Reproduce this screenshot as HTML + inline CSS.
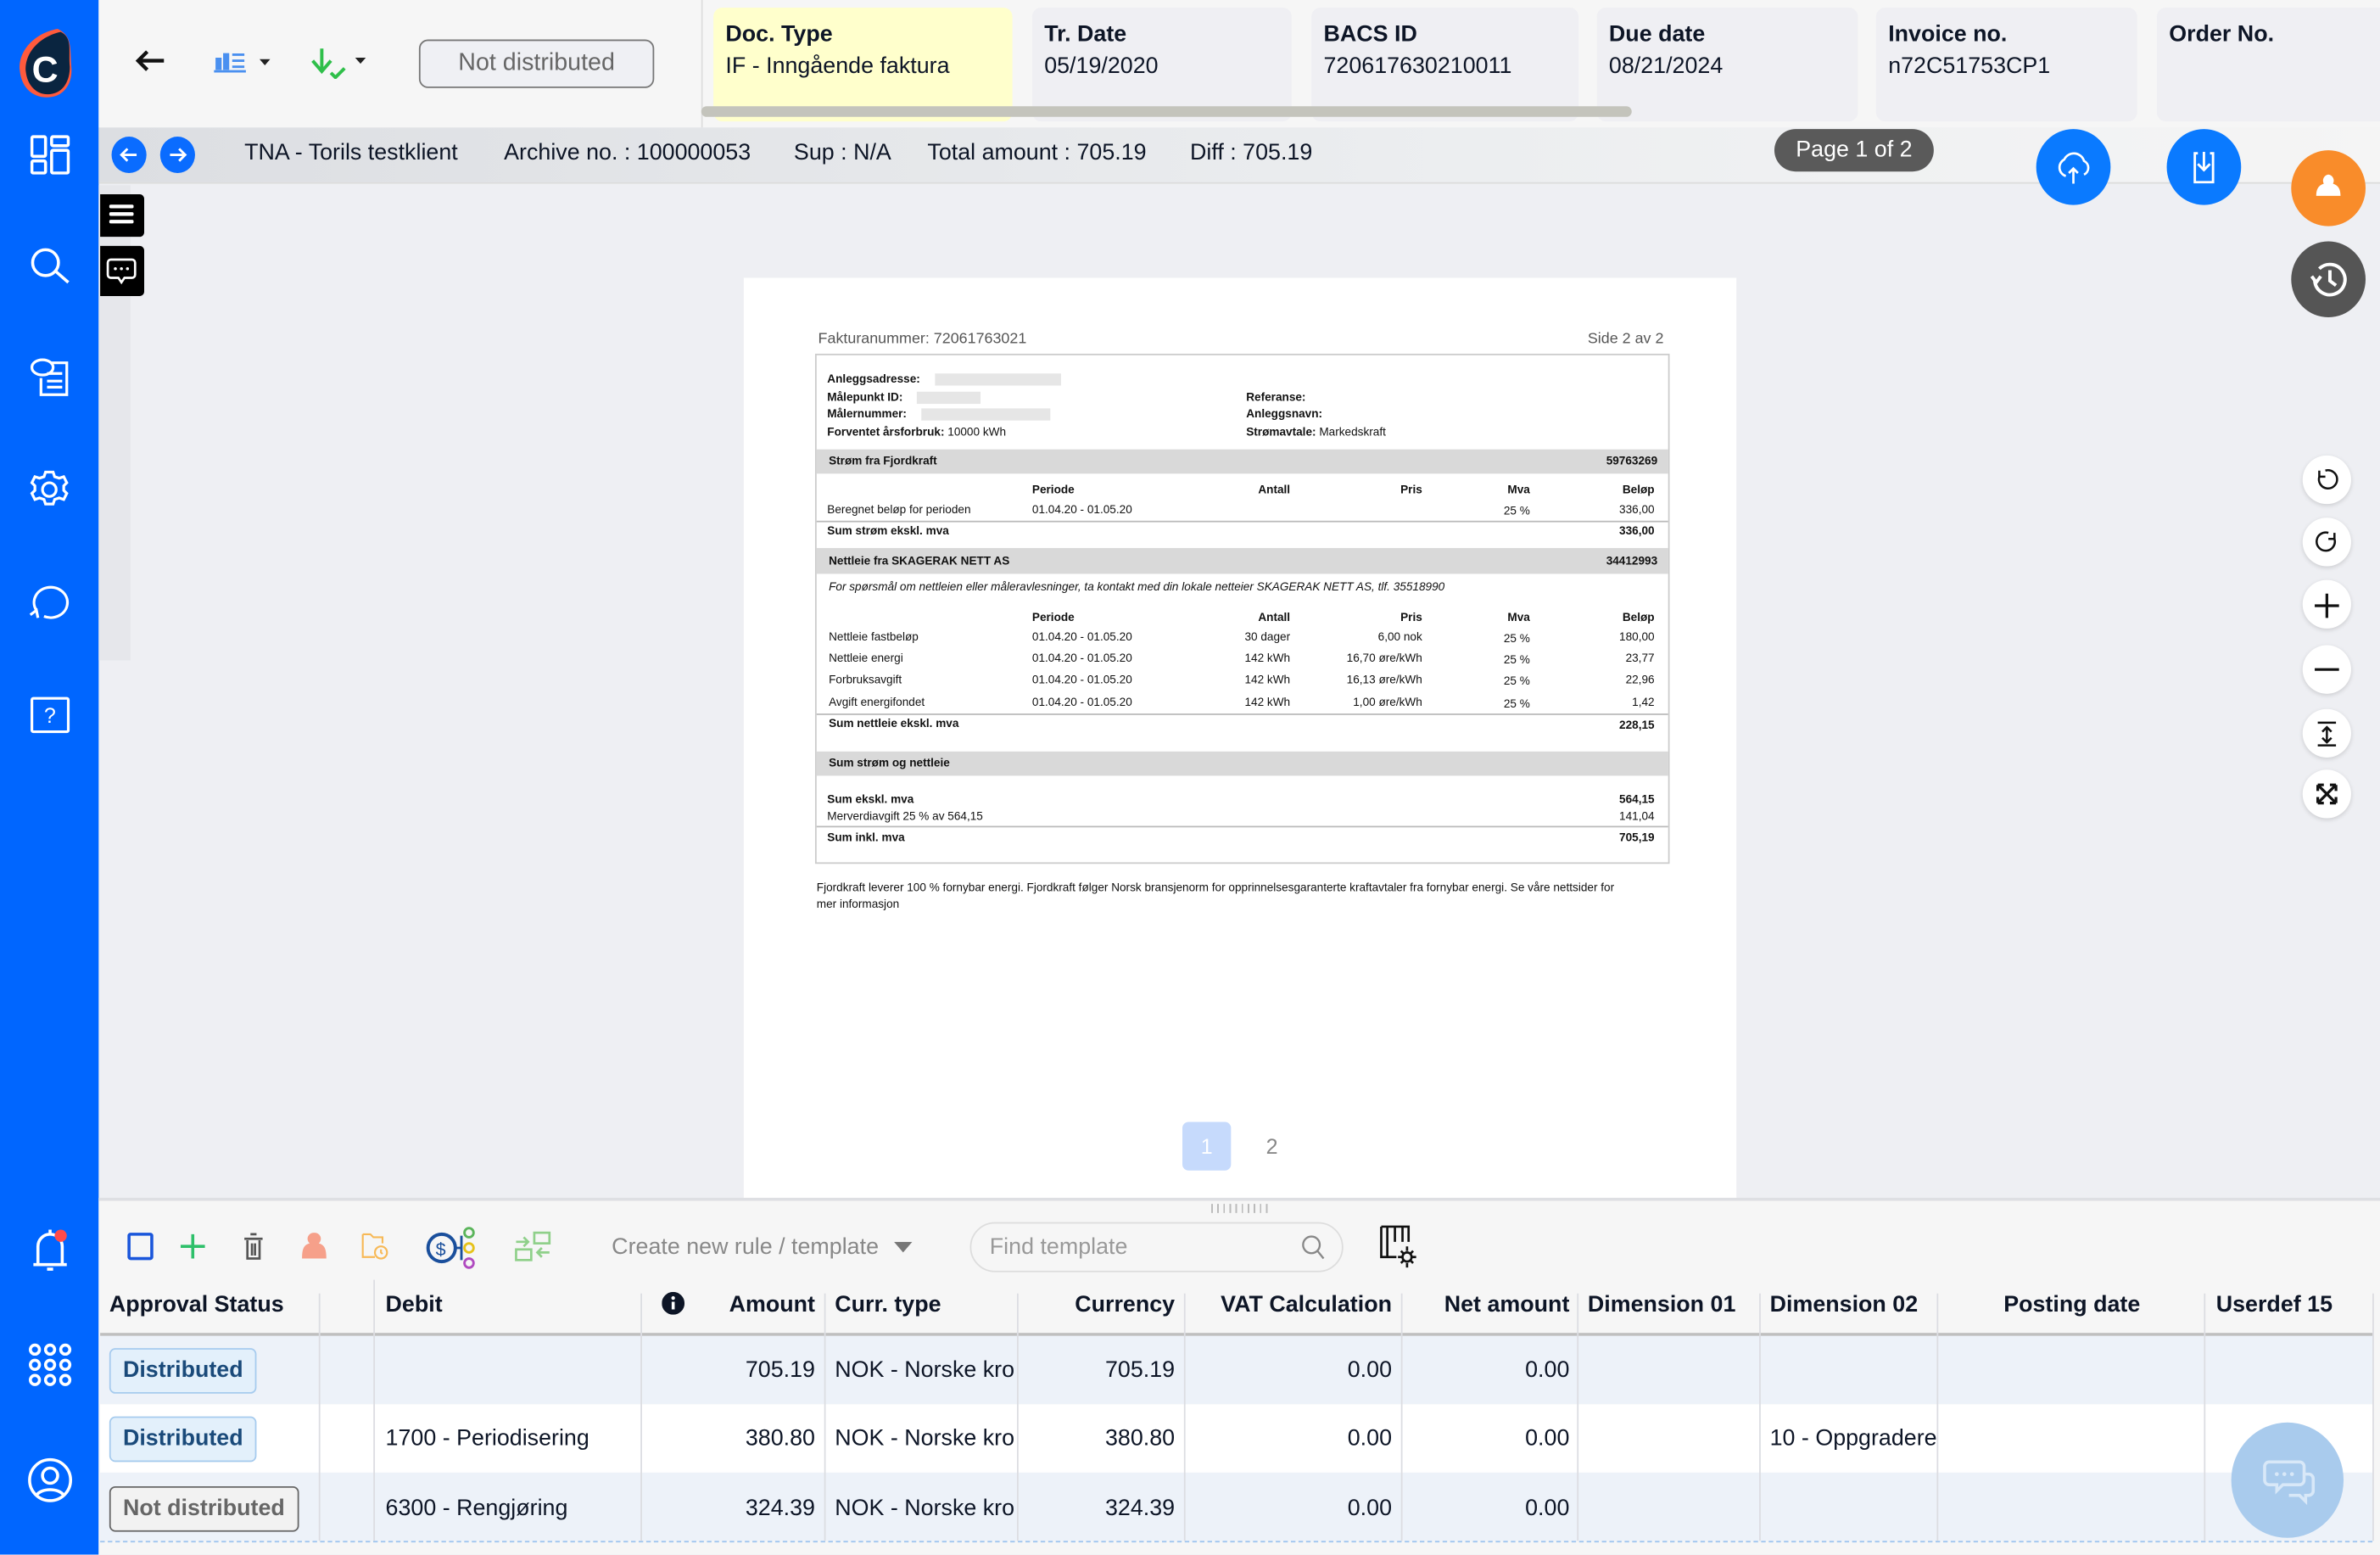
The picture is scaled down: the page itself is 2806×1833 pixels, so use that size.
<!DOCTYPE html>
<html><head><meta charset="utf-8">
<style>
*{margin:0;padding:0;box-sizing:border-box}
html,body{width:2806px;height:1832px;overflow:hidden;background:#eeeff3}
#s{position:absolute;left:0;top:0;width:1568px;height:1024px;transform:scale(1.78954);transform-origin:0 0;font-family:"Liberation Sans",sans-serif;color:#0d1526;background:#eeeff3;overflow:hidden}
.a{position:absolute}
.t{position:absolute;white-space:nowrap}
.r{position:absolute;white-space:nowrap;text-align:right}
.card{position:absolute;top:5px;height:75px;background:#efeff3;border-radius:6px;padding:9px 8px;font-size:15px}
.card b{display:block;margin-bottom:4px}
.d{font-size:7.6px;line-height:10px;color:#111;position:absolute;white-space:nowrap}
.dr{font-size:7.6px;line-height:10px;color:#111;position:absolute;white-space:nowrap;text-align:right;width:100px}
.band{position:absolute;left:538px;width:561px;background:#d9d9d9}
.hl{position:absolute;left:538px;width:561px;height:1px;background:#bbb}
.rt{position:absolute;width:32px;height:32px;border-radius:50%;background:#fff;left:1517px;box-shadow:0 1px 3px rgba(0,0,0,.15)}
.h{position:absolute;top:851px;font-size:15px;font-weight:bold;white-space:nowrap}
.c{position:absolute;font-size:15px;white-space:nowrap}
.vs{position:absolute;width:1px;background:#dcdde2}
.pill{position:absolute;left:72px;height:30px;border-radius:4px;font-size:15px;font-weight:bold;padding:5px 8px}
</style></head><body><div id="s">
<!-- sidebar -->
<div class="a" style="left:0;top:0;width:65px;height:1024px;background:#0066ff"></div>
<svg class="a" style="left:8px;top:16px" width="46" height="50" viewBox="0 0 46 50"><path d="M30 3C14 6 4 18 5 30c1 12 9 19 20 18 10-1 15-10 14-20C38 16 40 8 30 3z" fill="#ff5a3c"/><path d="M32 5C18 8 8 19 9 31c1 10 8 16 16 15 9-1 13-9 13-18C37 17 40 9 32 5z" fill="#0a2540"/><text x="13" y="38" font-family="Liberation Sans" font-weight="bold" font-size="24" fill="#fff">C</text></svg>
<svg class="a" style="left:20px;top:89px" width="26" height="26" viewBox="0 0 26 26" fill="none" stroke="#fff" stroke-width="2"><rect x="1" y="1" width="9" height="13" rx="1"/><rect x="1" y="17" width="9" height="8" rx="1"/><rect x="14" y="1" width="11" height="6" rx="1"/><rect x="14" y="10" width="11" height="15" rx="1"/></svg>
<svg class="a" style="left:20px;top:163px" width="26" height="26" viewBox="0 0 26 26" fill="none" stroke="#fff" stroke-width="2"><circle cx="10" cy="10" r="8.5"/><path d="M17 16l8 7"/></svg>
<svg class="a" style="left:20px;top:236px" width="26" height="26" viewBox="0 0 26 26" fill="none" stroke="#fff" stroke-width="1.8"><ellipse cx="8" cy="6" rx="7" ry="5"/><path d="M13 3h11v21H7v-11M11 10h10M11 15h10M11 19h10"/></svg>
<svg class="a" style="left:19px;top:309px" width="27" height="27" viewBox="0 0 27 27" fill="none" stroke="#fff" stroke-width="1.8"><circle cx="13.5" cy="13.5" r="4.5"/><path d="M11 2h5l1 3 3 1 3-1 2 4-2 2v3l2 2-2 4-3-1-3 1-1 3h-5l-1-3-3-1-3 1-2-4 2-2v-3L2 9l2-4 3 1 3-1z"/></svg>
<svg class="a" style="left:19px;top:383px" width="28" height="26" viewBox="0 0 28 26" fill="none" stroke="#fff" stroke-width="1.8"><path d="M5 19A11 10 0 1 1 10 23M1 22l4-3 1 5"/></svg>
<svg class="a" style="left:20px;top:459px" width="26" height="24" viewBox="0 0 26 24" fill="none" stroke="#fff" stroke-width="1.8"><rect x="1" y="1" width="24" height="22" rx="1"/><text x="9" y="17" font-family="Liberation Sans" font-size="14" fill="#fff" stroke="none">?</text></svg>
<svg class="a" style="left:20px;top:807px" width="26" height="32" viewBox="0 0 26 32" fill="none" stroke="#fff" stroke-width="2"><path d="M13 3v3M5 25V14a8 8 0 0 1 16 0v11M2 26h22M11 29h4"/><circle cx="20" cy="7" r="4" fill="#ff4b4b" stroke="none"/></svg>
<svg class="a" style="left:18px;top:884px" width="30" height="30" viewBox="0 0 30 30" fill="none" stroke="#fff" stroke-width="2"><circle cx="5" cy="5" r="3"/><circle cx="15" cy="5" r="3"/><circle cx="25" cy="5" r="3"/><circle cx="5" cy="15" r="3"/><circle cx="15" cy="15" r="3"/><circle cx="25" cy="15" r="3"/><circle cx="5" cy="25" r="3"/><circle cx="15" cy="25" r="3"/><circle cx="25" cy="25" r="3"/></svg>
<svg class="a" style="left:18px;top:960px" width="30" height="30" viewBox="0 0 30 30" fill="none" stroke="#fff" stroke-width="2"><circle cx="15" cy="15" r="13.5"/><circle cx="15" cy="12" r="5"/><path d="M6 25c3-5 15-5 18 0"/></svg>

<!-- top bar -->
<div class="a" style="left:65px;top:0;width:1503px;height:84px;background:#f6f6f6"></div>
<div class="a" style="left:462px;top:0;width:1px;height:84px;background:#dedede"></div>
<svg class="a" style="left:88px;top:32px" width="22" height="16" viewBox="0 0 22 16"><path d="M20 8H4M9 2L3 8l6 6" fill="none" stroke="#111" stroke-width="2.4"/></svg>
<svg class="a" style="left:140px;top:32px" width="40" height="18" viewBox="0 0 40 18"><path d="M2 14V6h4v8M7 14V3h4v11" fill="#4a90f0"/><path d="M13 4h8M13 8h8M13 12h8M1 15h21" stroke="#4a90f0" stroke-width="1.6"/><path d="M31 7h7l-3.5 4z" fill="#222"/></svg>
<svg class="a" style="left:202px;top:30px" width="42" height="22" viewBox="0 0 42 22"><path d="M10 2v14M4 10l6 7 6-7M16 18l3 3 6-6" fill="none" stroke="#2fbf4a" stroke-width="2.2"/><path d="M32 8h7l-3.5 4z" fill="#222"/></svg>
<div class="a" style="left:276px;top:26px;width:155px;height:32px;border:1.5px solid #777;border-radius:6px;background:#eff0f4;font-size:16px;color:#666;text-align:center;line-height:29px">Not distributed</div>
<div class="card" style="left:470px;width:197px;background:#ffffcc"><b>Doc. Type</b>IF - Inngående faktura</div>
<div class="card" style="left:680px;width:171px"><b>Tr. Date</b>05/19/2020</div>
<div class="card" style="left:864px;width:176px"><b>BACS ID</b>720617630210011</div>
<div class="card" style="left:1052px;width:172px"><b>Due date</b>08/21/2024</div>
<div class="card" style="left:1236px;width:172px"><b>Invoice no.</b>n72C51753CP1</div>
<div class="card" style="left:1421px;width:160px"><b>Order No.</b></div>
<div class="a" style="left:462px;top:70px;width:613px;height:7px;border-radius:4px;background:#c4c4bc"></div>

<!-- info bar -->
<div class="a" style="left:65px;top:84px;width:1503px;height:37px;background:linear-gradient(90deg,#dcdee2,#eceef0 60%,#f5f5f5);border-bottom:1px solid #dcdcdc"></div>
<svg class="a" style="left:73px;top:89px" width="58" height="26" viewBox="0 0 58 26"><ellipse cx="12" cy="13" rx="11.5" ry="12" fill="#0a6cff"/><ellipse cx="44" cy="13" rx="11.5" ry="12" fill="#0a6cff"/><path d="M17 13H8M11 9l-4 4 4 4M39 13h9M45 9l4 4-4 4" fill="none" stroke="#fff" stroke-width="1.6"/></svg>
<div class="t" style="left:161px;top:92px;font-size:15px">TNA - Torils testklient</div>
<div class="t" style="left:332px;top:92px;font-size:15px">Archive no. : 100000053</div>
<div class="t" style="left:523px;top:92px;font-size:15px">Sup : N/A</div>
<div class="t" style="left:611px;top:92px;font-size:15px">Total amount : 705.19</div>
<div class="t" style="left:784px;top:92px;font-size:15px">Diff : 705.19</div>
<div class="a" style="left:1169px;top:85px;width:105px;height:28px;border-radius:14px;background:#5a5a5a;color:#fff;font-size:15px;text-align:center;line-height:28px">Page 1 of 2</div>
<svg class="a" style="left:1341px;top:84px" width="50" height="52" viewBox="0 0 50 52"><ellipse cx="25" cy="26" rx="24.5" ry="25" fill="#0a7aff"/><path d="M20 32a6 6 0 0 1-1-11 7 7 0 0 1 13 1 5 5 0 0 1 0 9M25 37V27M22 30l3-3 3 3" fill="none" stroke="#fff" stroke-width="1.5"/></svg>
<svg class="a" style="left:1427px;top:84px" width="50" height="52" viewBox="0 0 50 52"><ellipse cx="25" cy="26" rx="24.5" ry="25" fill="#0a7aff"/><path d="M21 17h-2v19h12V17h-2M25 16v12M21 24l4 4 4-4" fill="none" stroke="#fff" stroke-width="1.6"/></svg>
<svg class="a" style="left:1509px;top:98px" width="50" height="52" viewBox="0 0 50 52"><ellipse cx="25" cy="26" rx="24.5" ry="25" fill="#f98c2a"/><path d="M25 17a4 4 0 0 1 3 6c3 1 5 3 5 8H17c0-5 2-7 5-8a4 4 0 0 1 3-6z" fill="#fff"/></svg>
<svg class="a" style="left:1509px;top:158px" width="50" height="52" viewBox="0 0 50 52"><ellipse cx="25" cy="26" rx="24.5" ry="25" fill="#555"/><path d="M16 27a10 10 0 1 0 3-8M14 24l3 4 3-4M26 20v7l4 3" fill="none" stroke="#fff" stroke-width="2.2"/></svg>

<!-- left sliver + black buttons -->
<div class="a" style="left:65px;top:122px;width:21px;height:313px;background:#e6e7eb"></div>
<div class="a" style="left:66px;top:128px;width:29px;height:28px;background:#000;border-radius:0 3px 3px 0"></div>
<svg class="a" style="left:72px;top:134px" width="16" height="14" viewBox="0 0 16 14"><path d="M1 2h14M1 7h14M1 12h14" stroke="#fff" stroke-width="2.4" stroke-linecap="round"/></svg>
<div class="a" style="left:66px;top:162px;width:29px;height:33px;background:#000;border-radius:0 3px 3px 0"></div>
<svg class="a" style="left:70px;top:170px" width="20" height="18" viewBox="0 0 20 18"><path d="M3 1h14a2 2 0 0 1 2 2v8a2 2 0 0 1-2 2h-5l-2 3-2-3H3a2 2 0 0 1-2-2V3a2 2 0 0 1 2-2z" fill="none" stroke="#fff" stroke-width="1.5"/><circle cx="6" cy="7" r="1" fill="#fff"/><circle cx="10" cy="7" r="1" fill="#fff"/><circle cx="14" cy="7" r="1" fill="#fff"/></svg>

<!-- document -->
<div class="a" style="left:490px;top:183px;width:654px;height:606px;background:#fff"></div>
<div class="t" style="left:539px;top:218px;font-size:10px;color:#555">Fakturanummer: 72061763021</div>
<div class="t" style="left:1046px;top:218px;font-size:10px;color:#555">Side 2 av 2</div>
<div class="a" style="left:537px;top:233px;width:563px;height:336px;border:1px solid #ccc"></div>
<div class="d" style="left:545px;top:245px"><b>Anleggsadresse:</b></div><div class="a" style="left:616px;top:246px;width:83px;height:8px;background:#e6e6e6"></div>
<div class="d" style="left:545px;top:257px"><b>Målepunkt ID:</b></div><div class="a" style="left:604px;top:258px;width:42px;height:8px;background:#e6e6e6"></div>
<div class="d" style="left:545px;top:268px"><b>Målernummer:</b></div><div class="a" style="left:607px;top:269px;width:85px;height:8px;background:#e6e6e6"></div>
<div class="d" style="left:545px;top:280px"><b>Forventet årsforbruk:</b> 10000 kWh</div>
<div class="d" style="left:821px;top:257px"><b>Referanse:</b></div>
<div class="d" style="left:821px;top:268px"><b>Anleggsnavn:</b></div>
<div class="d" style="left:821px;top:280px"><b>Strømavtale:</b> Markedskraft</div>
<div class="band" style="top:296px;height:16px"></div>
<div class="d" style="left:546px;top:299px"><b>Strøm fra Fjordkraft</b></div><div class="dr" style="left:992px;top:299px"><b>59763269</b></div>
<div class="d" style="left:680px;top:318px"><b>Periode</b></div><div class="dr" style="left:750px;top:318px"><b>Antall</b></div><div class="dr" style="left:837px;top:318px"><b>Pris</b></div><div class="dr" style="left:908px;top:318px"><b>Mva</b></div><div class="dr" style="left:990px;top:318px"><b>Beløp</b></div>
<div class="d" style="left:545px;top:331px">Beregnet beløp for perioden</div><div class="d" style="left:680px;top:331px">01.04.20 - 01.05.20</div><div class="dr" style="left:908px;top:332px">25 %</div><div class="dr" style="left:990px;top:331px">336,00</div>
<div class="hl" style="top:343px"></div>
<div class="d" style="left:545px;top:345px"><b>Sum strøm ekskl. mva</b></div><div class="dr" style="left:990px;top:345px"><b>336,00</b></div>
<div class="band" style="top:361px;height:17px"></div>
<div class="d" style="left:546px;top:365px"><b>Nettleie fra SKAGERAK NETT AS</b></div><div class="dr" style="left:992px;top:365px"><b>34412993</b></div>
<div class="d" style="left:546px;top:382px;font-style:italic">For spørsmål om nettleien eller måleravlesninger, ta kontakt med din lokale netteier SKAGERAK NETT AS, tlf. 35518990</div>
<div class="d" style="left:680px;top:402px"><b>Periode</b></div><div class="dr" style="left:750px;top:402px"><b>Antall</b></div><div class="dr" style="left:837px;top:402px"><b>Pris</b></div><div class="dr" style="left:908px;top:402px"><b>Mva</b></div><div class="dr" style="left:990px;top:402px"><b>Beløp</b></div>
<div class="d" style="left:546px;top:415px">Nettleie fastbeløp</div><div class="d" style="left:680px;top:415px">01.04.20 - 01.05.20</div><div class="dr" style="left:750px;top:415px">30 dager</div><div class="dr" style="left:837px;top:415px">6,00 nok</div><div class="dr" style="left:908px;top:416px">25 %</div><div class="dr" style="left:990px;top:415px">180,00</div>
<div class="d" style="left:546px;top:429px">Nettleie energi</div><div class="d" style="left:680px;top:429px">01.04.20 - 01.05.20</div><div class="dr" style="left:750px;top:429px">142 kWh</div><div class="dr" style="left:837px;top:429px">16,70 øre/kWh</div><div class="dr" style="left:908px;top:430px">25 %</div><div class="dr" style="left:990px;top:429px">23,77</div>
<div class="d" style="left:546px;top:443px">Forbruksavgift</div><div class="d" style="left:680px;top:443px">01.04.20 - 01.05.20</div><div class="dr" style="left:750px;top:443px">142 kWh</div><div class="dr" style="left:837px;top:443px">16,13 øre/kWh</div><div class="dr" style="left:908px;top:444px">25 %</div><div class="dr" style="left:990px;top:443px">22,96</div>
<div class="d" style="left:546px;top:458px">Avgift energifondet</div><div class="d" style="left:680px;top:458px">01.04.20 - 01.05.20</div><div class="dr" style="left:750px;top:458px">142 kWh</div><div class="dr" style="left:837px;top:458px">1,00 øre/kWh</div><div class="dr" style="left:908px;top:459px">25 %</div><div class="dr" style="left:990px;top:458px">1,42</div>
<div class="hl" style="top:470px"></div>
<div class="d" style="left:546px;top:472px"><b>Sum nettleie ekskl. mva</b></div><div class="dr" style="left:990px;top:473px"><b>228,15</b></div>
<div class="band" style="top:495px;height:16px"></div>
<div class="d" style="left:546px;top:498px"><b>Sum strøm og nettleie</b></div>
<div class="d" style="left:545px;top:522px"><b>Sum ekskl. mva</b></div><div class="dr" style="left:990px;top:522px"><b>564,15</b></div>
<div class="d" style="left:545px;top:533px">Merverdiavgift 25 % av 564,15</div><div class="dr" style="left:990px;top:533px">141,04</div>
<div class="hl" style="top:544px"></div>
<div class="d" style="left:545px;top:547px"><b>Sum inkl. mva</b></div><div class="dr" style="left:990px;top:547px"><b>705,19</b></div>
<div class="d" style="left:538px;top:580px">Fjordkraft leverer 100 % fornybar energi. Fjordkraft følger Norsk bransjenorm for opprinnelsesgaranterte kraftavtaler fra fornybar energi. Se våre nettsider for</div>
<div class="d" style="left:538px;top:591px">mer informasjon</div>
<div class="a" style="left:779px;top:739px;width:32px;height:32px;border-radius:4px;background:#c6dafc;color:#fff;font-size:14px;text-align:center;line-height:32px">1</div>
<div class="a" style="left:822px;top:739px;width:32px;height:32px;border-radius:4px;background:#fff;color:#888;font-size:14px;text-align:center;line-height:32px">2</div>

<!-- right tools -->
<div class="rt" style="top:300px"></div><div class="rt" style="top:341px"></div><div class="rt" style="top:382px"></div><div class="rt" style="top:425px"></div><div class="rt" style="top:467px"></div><div class="rt" style="top:507px"></div>
<svg class="a" style="left:1517px;top:300px" width="32" height="240" viewBox="0 0 32 240" fill="none" stroke="#111" stroke-width="1.4"><path d="M11 14a6 6 0 1 0 4-4M11 10v4h4"/><path d="M21 55a6 6 0 1 1-4-4M21 51v4h-4"/><path d="M16 91v16M8 99h16" stroke-width="1.8"/><path d="M8 141h16" stroke-width="1.8"/><path d="M10 176h12M10 191h12M16 179v10M13 182l3-3 3 3M13 186l3 3 3-3"/><path d="M10 217l12 12M22 217l-12 12M10 217h4M10 217v4M22 229h-4M22 229v-4M22 217h-4M22 217v4M10 229h4M10 229v-4" stroke-width="1.8"/></svg>

<!-- bottom panel -->
<div class="a" style="left:65px;top:789px;width:1503px;height:235px;background:#f6f6f6;border-top:2px solid #dedfe3"></div>
<div class="a" style="left:798px;top:793px;width:38px;height:6px;background:repeating-linear-gradient(90deg,#bbb 0 1px,transparent 1px 4px)"></div>
<div class="a" style="left:84px;top:812px;width:17px;height:18px;border:2px solid #1a56db;border-radius:2px"></div>
<svg class="a" style="left:118px;top:812px" width="18" height="18"><path d="M9 1v16M1 9h16" stroke="#2ec06a" stroke-width="2"/></svg>
<svg class="a" style="left:160px;top:812px" width="14" height="18"><path d="M1 4h12M5 1h4M3 5v12h8V5M6 7v8M8 7v8" fill="none" stroke="#555" stroke-width="1.5"/></svg>
<svg class="a" style="left:198px;top:811px" width="18" height="20"><path d="M9 1a4 4 0 0 1 3 7c4 1 5 4 5 10H1c0-6 1-9 5-10a4 4 0 0 1 3-7z" fill="#f6a08a"/></svg>
<svg class="a" style="left:238px;top:811px" width="18" height="20" fill="none" stroke="#f7b957" stroke-width="1.2"><path d="M1 2h5l2 2h6v4M1 2v15h8"/><circle cx="13" cy="14" r="4"/><path d="M13 12v2l1 1"/></svg>
<svg class="a" style="left:280px;top:806px" width="36" height="30" fill="none" stroke-width="1.6"><circle cx="11" cy="16" r="9" stroke="#1a4f9c" stroke-width="2.2"/><text x="7" y="21" font-size="12" fill="#1a4f9c" stroke="none" font-family="Liberation Sans">$</text><path d="M20 16h4M24 8v16" stroke="#1a4f9c"/><circle cx="29" cy="6" r="3" stroke="#5bb55b"/><circle cx="29" cy="16" r="3" stroke="#e6c21a"/><circle cx="29" cy="26" r="3" stroke="#b04ac0"/></svg>
<svg class="a" style="left:338px;top:810px" width="26" height="22" fill="none" stroke="#8fd08a" stroke-width="1.5"><rect x="14" y="2" width="10" height="7"/><rect x="2" y="13" width="10" height="7"/><path d="M2 8h8M7 5l3 3-3 3M24 15h-8M19 12l-3 3 3 3"/></svg>
<div class="t" style="left:403px;top:813px;font-size:15px;color:#888">Create new rule / template</div>
<svg class="a" style="left:589px;top:818px" width="12" height="8"><path d="M0 0h12L6 7z" fill="#777"/></svg>
<div class="a" style="left:639px;top:805px;width:246px;height:33px;border:1.5px solid #ddd;border-radius:17px;background:#f6f6f6"></div>
<div class="t" style="left:652px;top:813px;font-size:15px;color:#999">Find template</div>
<svg class="a" style="left:857px;top:813px" width="16" height="18" fill="none" stroke="#888" stroke-width="1.3"><circle cx="7" cy="7" r="5.5"/><path d="M11 11l4 5"/></svg>
<svg class="a" style="left:909px;top:807px" width="26" height="28" fill="none" stroke="#111" stroke-width="1.5"><path d="M1 1h18v10M1 1v20h10M5 1v20M10 1v10M15 1v10"/><circle cx="18" cy="21" r="3"/><path d="M18 14v3M18 25v3M12 21h3M21 21h3M14 17l2 2M20 23l2 2M22 17l-2 2M14 25l2-2"/></svg>

<!-- table -->
<div class="a" style="left:66px;top:878px;width:1497px;height:2px;background:#bfbfbf"></div>
<div class="a" style="left:66px;top:880px;width:1497px;height:45px;background:#edf2f9"></div>
<div class="a" style="left:66px;top:925px;width:1497px;height:45px;background:#fff"></div>
<div class="a" style="left:66px;top:970px;width:1497px;height:45px;background:#edf2f9"></div>
<div class="a" style="left:66px;top:1015px;width:1497px;height:0;border-top:1.5px dashed #9cc3ee"></div>
<div class="vs" style="left:246px;top:843px;height:172px"></div>
<div class="vs" style="left:210px;top:852px;height:163px"></div><div class="vs" style="left:422px;top:852px;height:163px"></div><div class="vs" style="left:543px;top:852px;height:163px"></div><div class="vs" style="left:670px;top:852px;height:163px"></div><div class="vs" style="left:780px;top:852px;height:163px"></div><div class="vs" style="left:923px;top:852px;height:163px"></div><div class="vs" style="left:1039px;top:852px;height:163px"></div><div class="vs" style="left:1159px;top:852px;height:163px"></div><div class="vs" style="left:1276px;top:852px;height:163px"></div><div class="vs" style="left:1452px;top:852px;height:163px"></div><div class="vs" style="left:1563px;top:852px;height:163px"></div>
<div class="h" style="left:72px">Approval Status</div>
<div class="h" style="left:254px">Debit</div>
<svg class="a" style="left:436px;top:851px" width="15" height="15"><circle cx="7.5" cy="7.5" r="7.5" fill="#0d1526"/><path d="M7.5 6.5v5" stroke="#fff" stroke-width="2"/><circle cx="7.5" cy="4" r="1.2" fill="#fff"/></svg>
<div class="h" style="left:437px;width:100px;text-align:right">Amount</div>
<div class="h" style="left:550px">Curr. type</div>
<div class="h" style="left:674px;width:100px;text-align:right">Currency</div>
<div class="h" style="left:777px;width:140px;text-align:right">VAT Calculation</div>
<div class="h" style="left:914px;width:120px;text-align:right">Net amount</div>
<div class="h" style="left:1046px">Dimension 01</div>
<div class="h" style="left:1166px">Dimension 02</div>
<div class="h" style="left:1320px">Posting date</div>
<div class="h" style="left:1460px">Userdef 15</div>

<div class="pill" style="top:888px;background:#e3f0fb;border:1.5px solid #a6cbee;color:#1a4a7a">Distributed</div>
<div class="pill" style="top:933px;background:#e3f0fb;border:1.5px solid #a6cbee;color:#1a4a7a">Distributed</div>
<div class="pill" style="top:979px;background:#f2f2f2;border:1.5px solid #666;color:#666">Not distributed</div>

<div class="c" style="left:437px;top:894px;width:100px;text-align:right">705.19</div>
<div class="c" style="left:550px;top:894px;width:118px;overflow:hidden">NOK - Norske kroner</div>
<div class="c" style="left:674px;top:894px;width:100px;text-align:right">705.19</div>
<div class="c" style="left:817px;top:894px;width:100px;text-align:right">0.00</div>
<div class="c" style="left:934px;top:894px;width:100px;text-align:right">0.00</div>

<div class="c" style="left:254px;top:939px">1700 - Periodisering</div>
<div class="c" style="left:437px;top:939px;width:100px;text-align:right">380.80</div>
<div class="c" style="left:550px;top:939px;width:118px;overflow:hidden">NOK - Norske kroner</div>
<div class="c" style="left:674px;top:939px;width:100px;text-align:right">380.80</div>
<div class="c" style="left:817px;top:939px;width:100px;text-align:right">0.00</div>
<div class="c" style="left:934px;top:939px;width:100px;text-align:right">0.00</div>
<div class="c" style="left:1166px;top:939px;width:110px;overflow:hidden">10 - Oppgradere</div>

<div class="c" style="left:254px;top:985px">6300 - Rengjøring</div>
<div class="c" style="left:437px;top:985px;width:100px;text-align:right">324.39</div>
<div class="c" style="left:550px;top:985px;width:118px;overflow:hidden">NOK - Norske kroner</div>
<div class="c" style="left:674px;top:985px;width:100px;text-align:right">324.39</div>
<div class="c" style="left:817px;top:985px;width:100px;text-align:right">0.00</div>
<div class="c" style="left:934px;top:985px;width:100px;text-align:right">0.00</div>

<svg class="a" style="left:1468px;top:936px" width="80" height="80"><ellipse cx="39" cy="39" rx="37" ry="38" fill="#a9cbed"/><path d="M27 27h20a3 3 0 0 1 3 3v9a3 3 0 0 1-3 3H36l-4 4v-4h-5a3 3 0 0 1-3-3v-9a3 3 0 0 1 3-3zM50 35h3a3 3 0 0 1 3 3v8a3 3 0 0 1-3 3h-2v4l-4-4h-7" fill="none" stroke="#d8e8f8" stroke-width="2"/><circle cx="32" cy="35" r="1.3" fill="#d8e8f8"/><circle cx="37" cy="35" r="1.3" fill="#d8e8f8"/><circle cx="42" cy="35" r="1.3" fill="#d8e8f8"/></svg>
</div></body></html>
